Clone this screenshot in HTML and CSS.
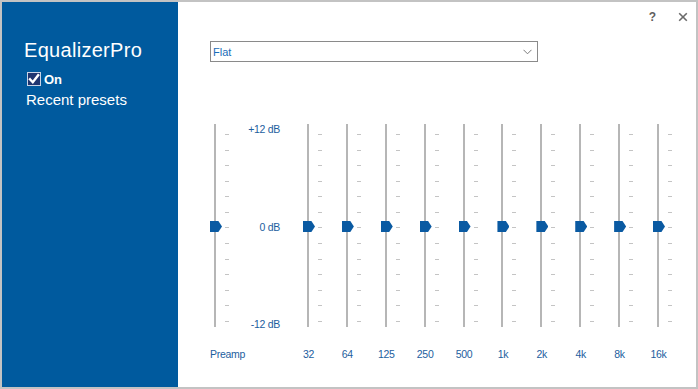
FILE: index.html
```html
<!DOCTYPE html>
<html>
<head>
<meta charset="utf-8">
<title>EqualizerPro</title>
<link rel="stylesheet" href="styles.css">
</head>
<body>
<div class="window">
  <aside class="sidebar">
    <div class="title">EqualizerPro</div>
    <label class="toggle">
      <svg class="check" width="14" height="14" viewBox="0 0 14 14"><rect x="0.5" y="0.5" width="13" height="13" fill="#1f3570" stroke="#c9d3e6"/><path d="M3 7.2 L5.8 10.2 L11.2 3.2" fill="none" stroke="#ffffff" stroke-width="2.4" stroke-linecap="square"/></svg>
      <span>On</span>
    </label>
    <div class="recent">Recent presets</div>
  </aside>
  <main class="main">
    <div class="titlebar">
      <span class="help">?</span>
      <svg class="close" width="10" height="10" viewBox="0 0 10 10"><path d="M1.2 1.2 L8.8 8.8 M8.8 1.2 L1.2 8.8" stroke="#6a6a6a" stroke-width="1.6"/></svg>
    </div>
    <div class="select">
      <span>Flat</span>
      <svg width="9" height="6" viewBox="0 0 9 6"><path d="M0.5 0.8 L4.5 4.8 L8.5 0.8" fill="none" stroke="#7a7a7a" stroke-width="1"/></svg>
    </div>
    <div class="eq">
      <div class="band preamp">
        <div class="rail"><div class="track"></div><div class="ticks"><i></i><i></i><i></i><i></i><i></i><i></i><i></i><i></i><i></i><i></i><i></i><i></i><i></i></div><div class="thumb"></div></div>
        <div class="band-label">Preamp</div>
      </div>
      <div class="scale"><span>+12 dB</span><span>0 dB</span><span>-12 dB</span></div>
      <div class="band">
        <div class="rail"><div class="track"></div><div class="ticks"><i></i><i></i><i></i><i></i><i></i><i></i><i></i><i></i><i></i><i></i><i></i><i></i><i></i></div><div class="thumb"></div></div>
        <div class="band-label">32</div>
      </div>
      <div class="band">
        <div class="rail"><div class="track"></div><div class="ticks"><i></i><i></i><i></i><i></i><i></i><i></i><i></i><i></i><i></i><i></i><i></i><i></i><i></i></div><div class="thumb"></div></div>
        <div class="band-label">64</div>
      </div>
      <div class="band">
        <div class="rail"><div class="track"></div><div class="ticks"><i></i><i></i><i></i><i></i><i></i><i></i><i></i><i></i><i></i><i></i><i></i><i></i><i></i></div><div class="thumb"></div></div>
        <div class="band-label">125</div>
      </div>
      <div class="band">
        <div class="rail"><div class="track"></div><div class="ticks"><i></i><i></i><i></i><i></i><i></i><i></i><i></i><i></i><i></i><i></i><i></i><i></i><i></i></div><div class="thumb"></div></div>
        <div class="band-label">250</div>
      </div>
      <div class="band">
        <div class="rail"><div class="track"></div><div class="ticks"><i></i><i></i><i></i><i></i><i></i><i></i><i></i><i></i><i></i><i></i><i></i><i></i><i></i></div><div class="thumb"></div></div>
        <div class="band-label">500</div>
      </div>
      <div class="band">
        <div class="rail"><div class="track"></div><div class="ticks"><i></i><i></i><i></i><i></i><i></i><i></i><i></i><i></i><i></i><i></i><i></i><i></i><i></i></div><div class="thumb"></div></div>
        <div class="band-label">1k</div>
      </div>
      <div class="band">
        <div class="rail"><div class="track"></div><div class="ticks"><i></i><i></i><i></i><i></i><i></i><i></i><i></i><i></i><i></i><i></i><i></i><i></i><i></i></div><div class="thumb"></div></div>
        <div class="band-label">2k</div>
      </div>
      <div class="band">
        <div class="rail"><div class="track"></div><div class="ticks"><i></i><i></i><i></i><i></i><i></i><i></i><i></i><i></i><i></i><i></i><i></i><i></i><i></i></div><div class="thumb"></div></div>
        <div class="band-label">4k</div>
      </div>
      <div class="band">
        <div class="rail"><div class="track"></div><div class="ticks"><i></i><i></i><i></i><i></i><i></i><i></i><i></i><i></i><i></i><i></i><i></i><i></i><i></i></div><div class="thumb"></div></div>
        <div class="band-label">8k</div>
      </div>
      <div class="band">
        <div class="rail"><div class="track"></div><div class="ticks"><i></i><i></i><i></i><i></i><i></i><i></i><i></i><i></i><i></i><i></i><i></i><i></i><i></i></div><div class="thumb"></div></div>
        <div class="band-label">16k</div>
      </div>
    </div>
  </main>
</div>
</body>
</html>
```

FILE: styles.css
```css
html, body {
  margin: 0;
  padding: 0;
  background: #ffffff;
}
body {
  font-family: "Liberation Sans", Arial, sans-serif;
}
.window {
  box-sizing: border-box;
  width: 698px;
  height: 389px;
  border: 2px solid #c3c3c3;
  display: flex;
  background: #ffffff;
}
.sidebar {
  width: 176px;
  flex: none;
  background: #005a9e;
  color: #ffffff;
  padding: 36px 0 0 22px;
  box-sizing: border-box;
}
.title {
  font-size: 20px;
  line-height: 24px;
  letter-spacing: 0.3px;
}
.toggle {
  display: flex;
  align-items: center;
  gap: 3px;
  margin-top: 9px;
  padding-left: 3px;
  height: 16px;
  font-size: 13px;
  font-weight: bold;
}
.check {
  display: block;
  flex: none;
}
.recent {
  margin-top: 4px;
  margin-left: 2px;
  font-size: 15px;
  line-height: 18px;
}
.main {
  flex: 1;
  display: flex;
  flex-direction: column;
  min-width: 0;
}
.titlebar {
  height: 28px;
  display: flex;
  justify-content: flex-end;
  align-items: center;
  gap: 22px;
  padding-right: 8px;
  padding-top: 1px;
  box-sizing: border-box;
}
.help {
  font-size: 12px;
  font-weight: bold;
  color: #5f5f5f;
  line-height: 12px;
}
.close {
  display: block;
}
.select {
  margin: 11px 0 0 32px;
  width: 328px;
  height: 21px;
  box-sizing: border-box;
  border: 1px solid #8a8a8a;
  display: flex;
  align-items: center;
  justify-content: space-between;
  padding: 0 5px 0 2px;
  font-size: 11px;
  color: #1a6cb8;
}
.select svg {
  display: block;
}
.eq {
  display: flex;
  margin: 62px 0 0 18px;
  font-size: 10.5px;
  letter-spacing: -0.3px;
  color: #1d5e9e;
}
.band {
  width: 38.9px;
  flex: none;
  display: flex;
  flex-direction: column;
}
.preamp {
  width: 39px;
}
.rail {
  position: relative;
  height: 203px;
  display: flex;
}
.track {
  width: 2px;
  margin-left: 18px;
  background: #b6b6b6;
}
.ticks {
  margin-left: 9px;
  display: flex;
  flex-direction: column;
  justify-content: space-between;
  padding: 10px 0 5px;
  box-sizing: border-box;
}
.ticks i {
  display: block;
  width: 4px;
  height: 1px;
  background: #c4c4c4;
}
.thumb {
  position: absolute;
  left: 14px;
  top: 97px;
  width: 12px;
  height: 11px;
  background: #0a5aa2;
  clip-path: polygon(0 0, 70% 0, 100% 50%, 70% 100%, 0 100%);
}
.band-label {
  margin-top: 21px;
  line-height: 12px;
  text-align: center;
  white-space: nowrap;
}
.preamp .band-label {
  text-align: left;
  padding-left: 14px;
}
.scale {
  width: 54px;
  flex: none;
  height: 207px;
  margin-top: -1px;
  box-sizing: border-box;
  padding-right: 9px;
  display: flex;
  flex-direction: column;
  justify-content: space-between;
  align-items: flex-end;
  line-height: 12px;
  white-space: nowrap;
}
```
